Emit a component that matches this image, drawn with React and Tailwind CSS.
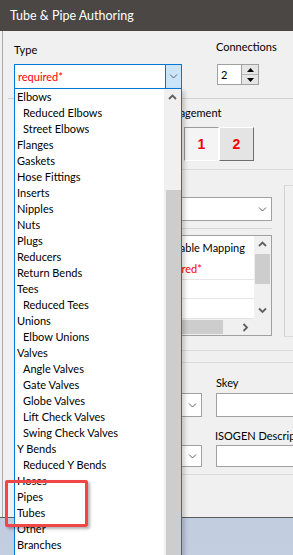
import React from "react";

const items = [
  ["Elbows", 0], ["Reduced Elbows", 1], ["Street Elbows", 1], ["Flanges", 0], ["Gaskets", 0],
  ["Hose Fittings", 0], ["Inserts", 0], ["Nipples", 0], ["Nuts", 0], ["Plugs", 0], ["Reducers", 0],
  ["Return Bends", 0], ["Tees", 0], ["Reduced Tees", 1], ["Unions", 0], ["Elbow Unions", 1],
  ["Valves", 0], ["Angle Valves", 1], ["Gate Valves", 1], ["Globe Valves", 1], ["Lift Check Valves", 1],
  ["Swing Check Valves", 1], ["Y Bends", 0], ["Reduced Y Bends", 1], ["Hoses", 0], ["Pipes", 0],
  ["Tubes", 0], ["Other", 0], ["Branches", 0],
];

const Chevron = ({ dir = "down", bold = false, color = "#606060" }) => {
  const pts = {
    down: "1,1.5 4.5,5 8,1.5",
    up: "1,5 4.5,1.5 8,5",
    right: "1.5,1 5,4.5 1.5,8",
  }[dir];
  const size = dir === "right" ? { w: 7, h: 9 } : { w: 9, h: 6.5 };
  return (
    <svg width={size.w} height={size.h} viewBox={`0 0 ${size.w} ${size.h}`}>
      <polyline points={pts} fill="none" stroke={color} strokeWidth={bold ? 1.8 : 1} />
    </svg>
  );
};

const Tri = ({ up }) => (
  <svg width="7" height="4" viewBox="0 0 7 4">
    <polygon points={up ? "0,4 3.5,0 7,4" : "0,0 3.5,4 7,0"} fill="#000" />
  </svg>
);

export default function App() {
  return (
    <div className="relative w-[293px] h-[555px] overflow-hidden bg-gradient-to-b from-[#a9b7cf] to-[#c4cee1] font-['Lato',sans-serif] text-[11px] text-black">
      {/* window */}
      <div className="h-[518px] flex flex-col bg-[#f0f0f0] border-b border-[#5c5c5c]">
        <div className="h-[31px] shrink-0 bg-[#4a4745] text-white text-[12.5px] leading-[31px] pl-[10px]">
          Tube &amp; Pipe Authoring
        </div>
        <div className="flex-1 ml-[2px] border-l border-[#aaaaaa] overflow-hidden">
          {/* top row */}
          <div className="flex items-start">
            <div className="ml-[11px] w-[168px]">
              <div className="mt-[11px] leading-[16px]">Type</div>
              <div className="mt-[6px] h-[25px] flex border border-[#0078d7] bg-white">
                <span className="flex-1 pl-[3px] leading-[23px] text-[#ff0000]">required*</span>
                <span className="w-[16px] bg-[#cce4f7] border-l border-[#0078d7] flex items-center justify-center">
                  <Chevron dir="down" />
                </span>
              </div>
            </div>
            <div className="ml-[34px]">
              <div className="mt-[8px] leading-[16px] whitespace-nowrap">Connections</div>
              <div className="mt-[9px] ml-[1px] flex h-[21px]">
                <div className="w-[25px] border border-[#a0a0a0] bg-white pl-[3px] leading-[19px]">2</div>
                <div className="w-[17px] flex flex-col border-y border-r border-[#a0a0a0]">
                  <div className="flex-1 bg-[#e5e5e5] border-b border-[#b5b5b5] flex items-center justify-center">
                    <Tri up />
                  </div>
                  <div className="flex-1 bg-[#e5e5e5] flex items-center justify-center">
                    <Tri />
                  </div>
                </div>
              </div>
            </div>
          </div>

          {/* group box */}
          <div className="mt-[9px] ml-[5px] border-t border-[#d0d0d0]">
            <div className="ml-[88px] w-[400px]">
              {/* section A */}
              <div className="pb-[8px] border-b border-[#dadada]">
                <div className="mt-[6px] ml-[62px] leading-[16px]">Management</div>
                <div className="mt-[6px] ml-[88px] flex">
                  <div className="w-[35px] h-[34px] bg-[#f4f4f4] border border-t-[#9a9a9a] border-l-[#9a9a9a] border-b-white border-r-white flex items-center justify-center font-['Liberation_Sans',sans-serif] font-bold text-[14px] text-[#ff0000]">
                    1
                  </div>
                  <div className="w-[35px] h-[34px] bg-[#e4e4e4] border border-t-white border-l-white border-b-[#6e6e6e] border-r-[#6e6e6e] flex items-center justify-center font-['Liberation_Sans',sans-serif] font-bold text-[14px] text-[#ff0000]">
                    2
                  </div>
                </div>
              </div>

              {/* section B */}
              <div className="h-[181px] flex items-start border-b border-[#dadada]">
                <div className="w-[176px]">
                  <div className="mt-[27px] h-[24px] border border-[#a0a0a0] bg-white flex items-center justify-end pr-[4px]">
                    <Chevron dir="down" />
                  </div>
                  <div className="mt-[7px] border-t border-[#d6d6d6]" />
                  <div className="mt-[6px] h-[101px] border border-[#a0a0a0] bg-white flex flex-col">
                    <div className="flex h-[83px]">
                      <div className="flex-1 flex flex-col">
                        <div className="h-[24px] flex items-center">
                          <span className="w-[60px] shrink-0" />
                          <span className="pl-[4px] whitespace-nowrap">Variable Mapping</span>
                        </div>
                        <div className="h-[20px] flex items-center border-b border-[#e6e6e6]">
                          <span className="w-[56px] shrink-0" />
                          <span className="pl-[4px] text-[#ff0000]">required*</span>
                        </div>
                        <div className="h-[19px] border-b border-[#e6e6e6]" />
                        <div className="h-[20px] border-b border-[#e6e6e6]" />
                      </div>
                      <div className="w-[17px] bg-[#f0f0f0] flex flex-col">
                        <div className="h-[17px] flex items-center justify-center">
                          <Chevron dir="up" bold />
                        </div>
                        <div className="mt-[1px] mx-[1px] h-[30px] bg-[#cdcdcd]" />
                        <div className="flex-1" />
                        <div className="h-[17px] flex items-center justify-center">
                          <Chevron dir="down" bold />
                        </div>
                      </div>
                    </div>
                    <div className="flex-1 flex bg-[#f0f0f0]">
                      <div className="w-[126px] my-[1px] bg-[#cdcdcd]" />
                      <div className="flex-1" />
                      <div className="w-[17px] flex items-center justify-center">
                        <Chevron dir="right" bold />
                      </div>
                      <div className="w-[17px]" />
                    </div>
                  </div>
                </div>
                <div className="ml-[12px] mt-[15px] w-[60px] h-[152px] border border-[#dadada] border-l-[#d2d2d2]" />
              </div>

              {/* section C */}
              <div className="mt-[11px] pb-[7px] border-y border-[#dadada]">
                <div className="mt-[12px] ml-[120px] leading-[16px]">Skey</div>
                <div className="mt-[2px] flex h-[24px]">
                  <div className="w-[106px] border border-[#a0a0a0] bg-white flex items-center justify-end pr-[4px]">
                    <Chevron dir="down" />
                  </div>
                  <div className="ml-[14px] w-[120px] border border-[#a0a0a0] bg-white" />
                </div>
                <div className="mt-[11px] ml-[119px] leading-[16px] whitespace-nowrap">ISOGEN Description</div>
                <div className="mt-[1px] flex h-[22px]">
                  <div className="w-[106px] border border-[#a0a0a0] bg-white flex items-center justify-end pr-[4px]">
                    <Chevron dir="down" />
                  </div>
                  <div className="ml-[14px] w-[120px] border border-[#a0a0a0] bg-white" />
                </div>
              </div>
            </div>
          </div>
        </div>
      </div>

      {/* open dropdown list */}
      <div className="absolute left-[14px] top-[89px] w-[168px] h-[470px] flex bg-white border-x border-[#0078d7] shadow-[3px_2px_4px_rgba(0,0,0,0.18)]">
        <div className="flex-1">
          {items.map(([name, indent]) => (
            <div
              key={name}
              className={`h-[16px] leading-[16px] whitespace-nowrap ${indent ? "pl-[8px]" : "pl-[2px]"}`}
            >
              {name}
            </div>
          ))}
        </div>
        <div className="w-[17px] bg-[#f0f0f0] flex flex-col">
          <div className="h-[17px] flex items-center justify-center">
            <Chevron dir="up" bold />
          </div>
          <div className="h-[84px]" />
          <div className="flex-1 ml-[2px] bg-[#cdcdcd]" />
        </div>
      </div>

      {/* highlight */}
      <div className="absolute left-[5px] top-[480px] w-[83px] h-[47px] border-[3px] border-[#ef4646] rounded-[2px] shadow-[2px_2px_3px_rgba(0,0,0,0.3)]" />
    </div>
  );
}
